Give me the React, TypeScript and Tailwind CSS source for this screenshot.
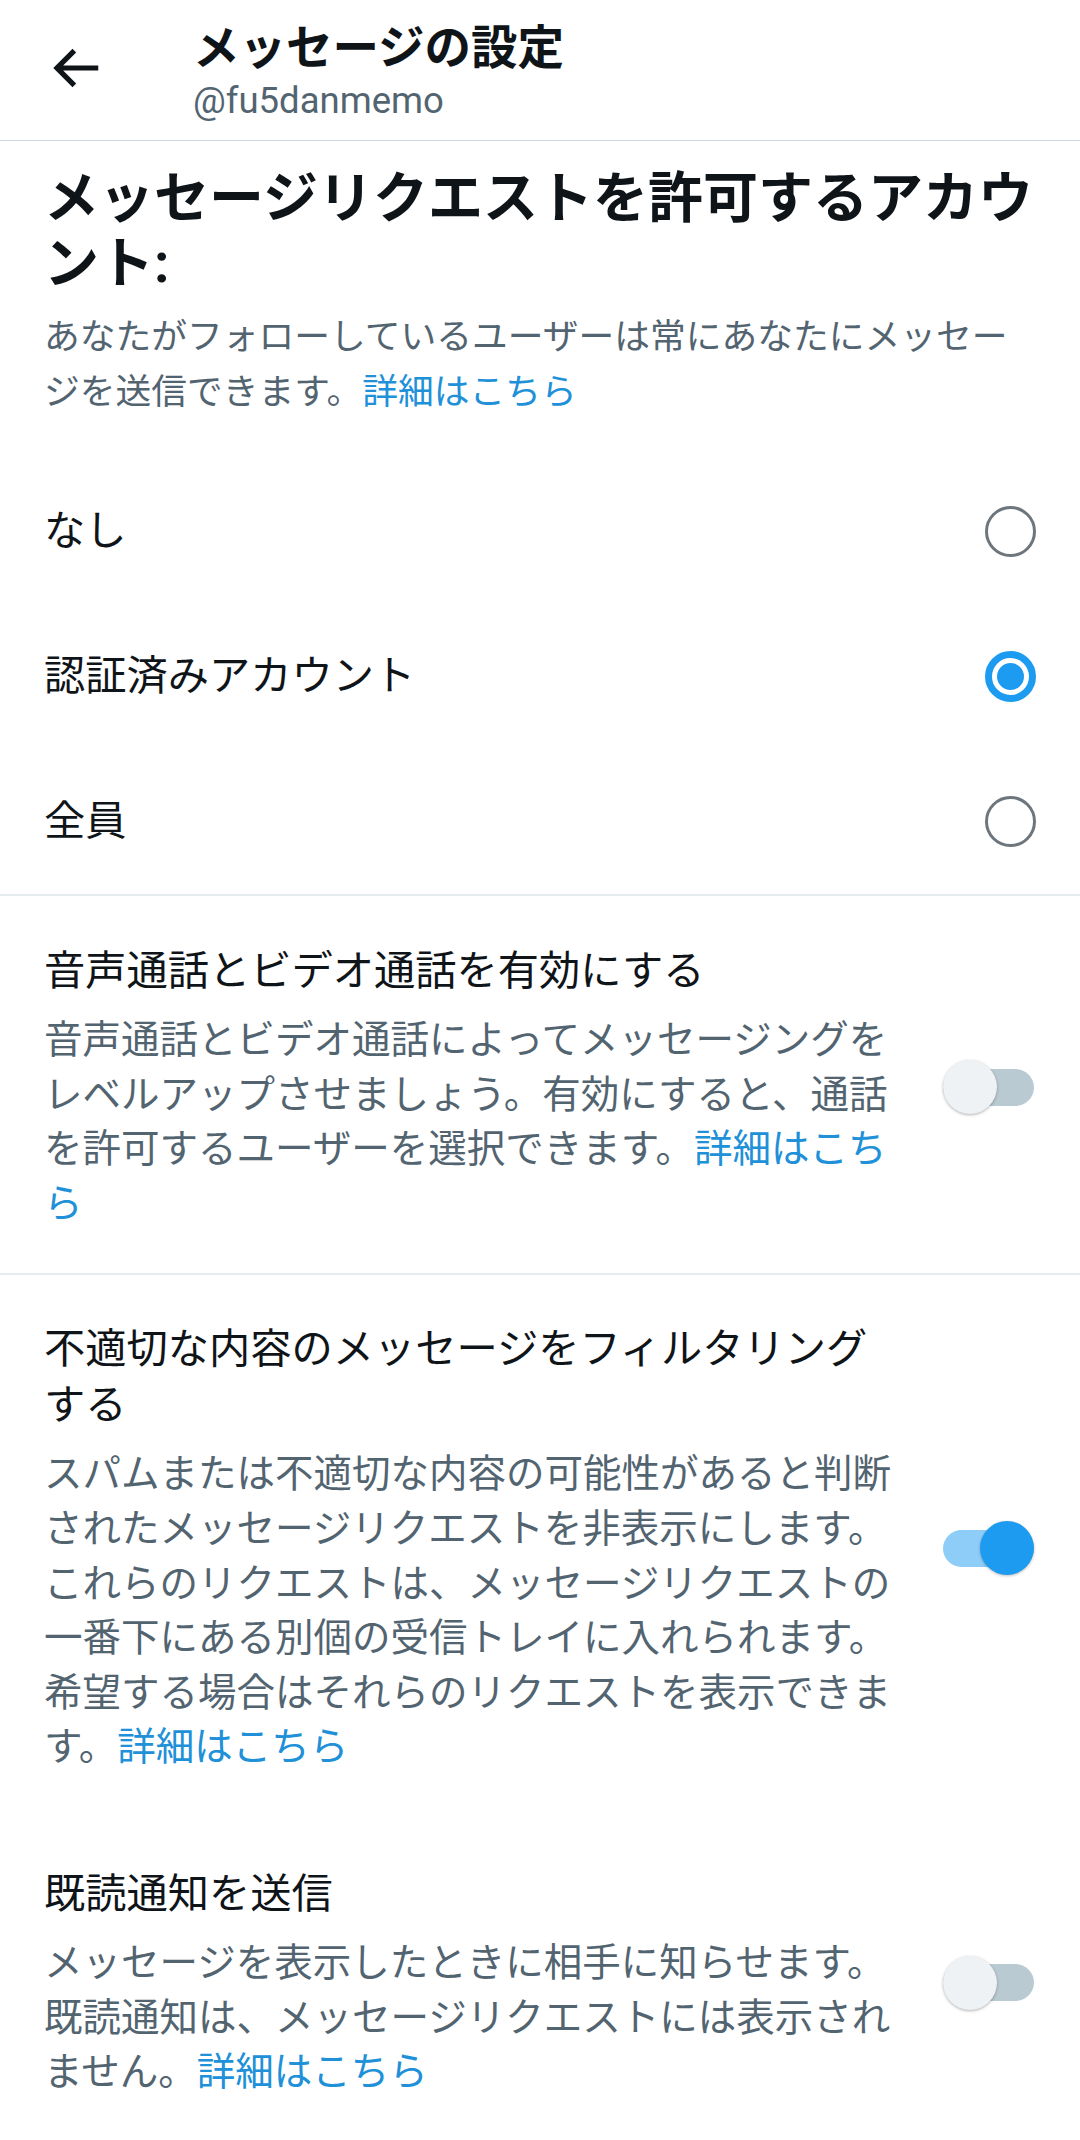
import React from "react";

const Link = () => <span className="text-[#2090d8]">詳細はこちら</span>;

function Radio({ checked }: { checked?: boolean }) {
  if (checked) {
    return (
      <div className="w-[51px] h-[51px] rounded-full border-[7px] border-[#1d9bf0] flex items-center justify-center shrink-0">
        <div className="w-[27px] h-[27px] rounded-full bg-[#1d9bf0]" />
      </div>
    );
  }
  return <div className="w-[51px] h-[51px] rounded-full border-[3px] border-[#6e767d] shrink-0" />;
}

function Toggle({ on }: { on?: boolean }) {
  return (
    <div className="relative w-[91px] h-[54px] shrink-0 mr-[2px]">
      <div
        className={
          "absolute left-0 right-0 top-[8.5px] h-[37px] rounded-full " +
          (on ? "bg-[#8ecdf8]" : "bg-[#b9cad3]")
        }
      />
      <div
        className={
          "absolute top-0 w-[54px] h-[54px] rounded-full " +
          (on
            ? "right-0 bg-[#1d9bf0] shadow-[0_1px_3px_rgba(0,0,0,0.25)]"
            : "left-0 bg-[#eef2f4] shadow-[0_1px_3px_rgba(0,0,0,0.3)]")
        }
      />
    </div>
  );
}

function ToggleSection({
  title,
  children,
  on,
  className,
}: {
  title: string;
  children: React.ReactNode;
  on?: boolean;
  className: string;
}) {
  return (
    <div className={"px-[44px] flex items-center gap-[41px] " + className}>
      <div className="w-[858px] shrink-0">
        <div className="text-[41.25px] leading-[56px]">{title}</div>
        <div className="mt-[14px] text-[38.5px] leading-[54.6px] text-[#536471]">{children}</div>
      </div>
      <Toggle on={on} />
    </div>
  );
}

export default function App() {
  return (
    <div className="w-[1080px] min-h-[2140px] bg-white text-[#0f1419] font-[family-name:Roboto,'Noto_Sans_CJK_JP',sans-serif]">
      <header className="flex h-[141px] border-b border-[#cfd9de]">
        <div className="w-[193px] shrink-0 pt-[37px] pl-[44px]">
          <svg viewBox="0 0 24 24" className="w-[62px] h-[62px] fill-[#0f1419]">
            <path d="M7.414 13l5.043 5.04-1.414 1.42L3.586 12l7.457-7.46 1.414 1.42L7.414 11H21v2H7.414z" />
          </svg>
        </div>
        <div className="pt-[20px]">
          <div className="text-[46.5px] leading-[56px] font-bold">メッセージの設定</div>
          <div className="mt-[3px] text-[36.5px] leading-[44px] text-[#536471]">@fu5danmemo</div>
        </div>
      </header>

      <div className="px-[44px] pt-[24.5px]">
        <h1 className="text-[55px] leading-[65px] font-bold">メッセージリクエストを許可するアカウント:</h1>
        <p className="mt-[14px] text-[35.75px] leading-[55px] text-[#536471]">
          あなたがフォローしているユーザーは常にあなたにメッセージを送信できます。<Link />
        </p>
        <div className="mt-[39px]">
          {[
            { label: "なし", checked: false },
            { label: "認証済みアカウント", checked: true },
            { label: "全員", checked: false },
          ].map((r) => (
            <div key={r.label} className="h-[145px] flex items-center justify-between">
              <span className="text-[41.25px] leading-[56px]">{r.label}</span>
              <Radio checked={r.checked} />
            </div>
          ))}
        </div>
      </div>

      <div className="h-[2px] bg-[#e6ebee]" />

      <ToggleSection title="音声通話とビデオ通話を有効にする" className="pt-[47.5px] pb-[42px]">
        音声通話とビデオ通話によってメッセージングをレベルアップさせましょう。有効にすると、通話を許可するユーザーを選択できます。<Link />
      </ToggleSection>

      <div className="h-[2px] bg-[#e6ebee]" />

      <ToggleSection title="不適切な内容のメッセージをフィルタリングする" on className="pt-[46px] pb-[45px]">
        スパムまたは不適切な内容の可能性があると判断されたメッセージリクエストを非表示にします。これらのリクエストは、メッセージリクエストの一番下にある別個の受信トレイに入れられます。希望する場合はそれらのリクエストを表示できます。<Link />
      </ToggleSection>

      <ToggleSection title="既読通知を送信" className="pt-[46px] pb-[40px]">
        メッセージを表示したときに相手に知らせます。既読通知は、メッセージリクエストには表示されません。<Link />
      </ToggleSection>
    </div>
  );
}
